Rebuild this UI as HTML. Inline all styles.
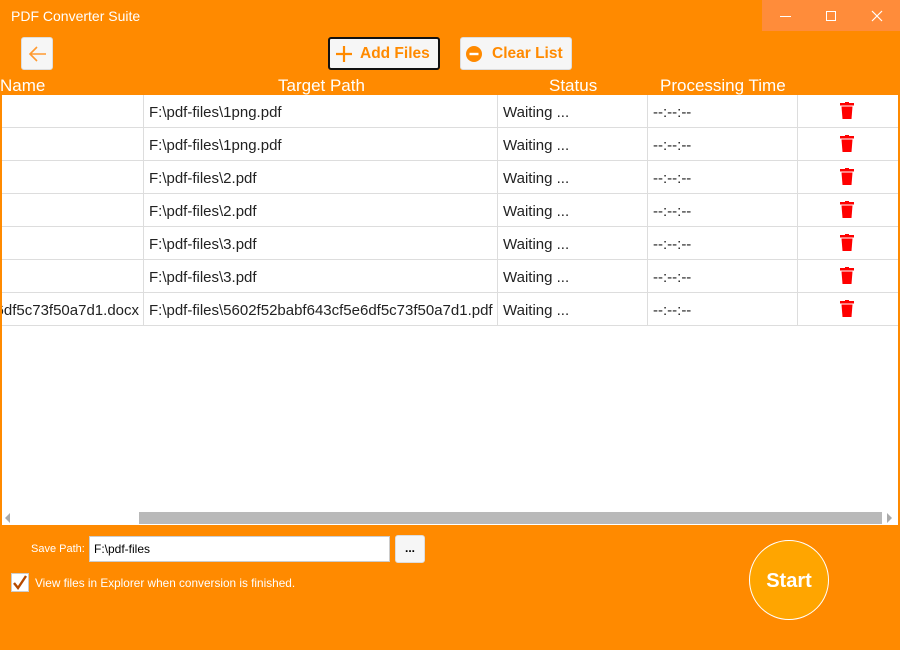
<!DOCTYPE html>
<html><head><style>
*{margin:0;padding:0;box-sizing:border-box}
body{width:900px;height:650px;background:#FF8A00;font-family:"Liberation Sans",sans-serif;position:relative;overflow:hidden}
.a{position:absolute}
.title{left:11px;top:8px;color:#fff;font-size:14px}
.ctl{left:762px;top:0;width:138px;height:31px;background:#FF8C3A}
.btn{background:#f6f6f6;border:1px solid #ddd;border-radius:3px;color:#FF8A00;font-weight:bold;font-size:15px}
.hdr{color:#fff;font-size:17px;top:76px}
.tbl{left:2px;top:95px;width:896px;height:430px;background:#fff}
.row{position:absolute;left:0;width:896px;height:33px;border-bottom:1px solid #ddd;font-size:15px;color:#222}
.row div{position:absolute;top:0;height:33px;line-height:36px;border-right:1px solid #ddd;white-space:nowrap;overflow:hidden}
.c1{left:0;width:142px;text-align:right;padding-right:4px}
.c2{left:142px;width:354px;padding-left:5px}
.c3{left:496px;width:150px;padding-left:5px}
.c4{left:646px;width:150px;padding-left:5px}
.c5{left:796px;width:100px;border-right:none!important}
</style></head><body>
<div class="a title">PDF Converter Suite</div>
<div class="a ctl">
<div class="a" style="left:18px;top:16px;width:11px;height:1px;background:#fff"></div>
<div class="a" style="left:64px;top:11px;width:10px;height:10px;border:1px solid #fff"></div>
<svg class="a" style="left:109px;top:10px" width="12" height="12"><path d="M1 1L11 11M11 1L1 11" stroke="#fff" stroke-width="1.2"/></svg>
</div>
<div class="a btn" style="left:21px;top:37px;width:32px;height:33px">
<svg class="a" style="left:5px;top:5px" width="22" height="22"><path d="M19 11H3M10 4L3 11L10 18" stroke="#FF9A30" stroke-width="1.6" fill="none"/></svg></div>
<div class="a btn" style="left:328px;top:37px;width:112px;height:33px;border:2px solid #111;line-height:30px;padding-left:30px;font-size:15.5px">Add Files
<svg class="a" style="left:5px;top:6px" width="18" height="18"><path d="M9 1V17M1 9H17" stroke="#FF8A00" stroke-width="2.2"/></svg></div>
<div class="a btn" style="left:460px;top:37px;width:112px;height:33px;line-height:32px;padding-left:31px;font-size:15.5px">Clear List
<svg class="a" style="left:4px;top:7px" width="18" height="18"><circle cx="9" cy="9" r="8" fill="#FF8A00"/><path d="M4.5 9H13.5" stroke="#fff" stroke-width="2.4"/></svg></div>
<div class="a hdr" style="left:0">Name</div>
<div class="a hdr" style="left:278px">Target Path</div>
<div class="a hdr" style="left:549px">Status</div>
<div class="a hdr" style="left:660px">Processing Time</div>
<div class="a tbl">
<div class="row" style="top:0"><div class="c1"></div><div class="c2">F:\pdf-files\1png.pdf</div><div class="c3">Waiting ...</div><div class="c4">--:--:--</div><div class="c5"></div></div>
<div class="row" style="top:33px"><div class="c1"></div><div class="c2">F:\pdf-files\1png.pdf</div><div class="c3">Waiting ...</div><div class="c4">--:--:--</div><div class="c5"></div></div>
<div class="row" style="top:66px"><div class="c1"></div><div class="c2">F:\pdf-files\2.pdf</div><div class="c3">Waiting ...</div><div class="c4">--:--:--</div><div class="c5"></div></div>
<div class="row" style="top:99px"><div class="c1"></div><div class="c2">F:\pdf-files\2.pdf</div><div class="c3">Waiting ...</div><div class="c4">--:--:--</div><div class="c5"></div></div>
<div class="row" style="top:132px"><div class="c1"></div><div class="c2">F:\pdf-files\3.pdf</div><div class="c3">Waiting ...</div><div class="c4">--:--:--</div><div class="c5"></div></div>
<div class="row" style="top:165px"><div class="c1"></div><div class="c2">F:\pdf-files\3.pdf</div><div class="c3">Waiting ...</div><div class="c4">--:--:--</div><div class="c5"></div></div>
<div class="row" style="top:198px"><div class="c1"><span style="position:absolute;right:4px;top:0">6df5c73f50a7d1.docx</span></div><div class="c2">F:\pdf-files\5602f52babf643cf5e6df5c73f50a7d1.pdf</div><div class="c3">Waiting ...</div><div class="c4">--:--:--</div><div class="c5"></div></div>
<div class="a" style="left:137px;top:417px;width:743px;height:12px;background:#b9b9b9"></div>
<svg class="a" style="left:3px;top:418px" width="6" height="10"><path d="M5 0L0 5L5 10Z" fill="#aaa"/></svg>
<svg class="a" style="left:885px;top:418px" width="6" height="10"><path d="M0 0L5 5L0 10Z" fill="#aaa"/></svg>
</div>
<svg class="a" style="left:839px;top:102px" width="16" height="482">
<defs><g id="t"><rect x="1" y="1" width="14" height="2.5" fill="#f00"/><rect x="6" y="0" width="4" height="2" fill="#f00"/><path d="M2.5 4.5H13.5L12.5 17H3.5Z" fill="#f00"/></g></defs>
<use href="#t" y="0"/><use href="#t" y="33"/><use href="#t" y="66"/><use href="#t" y="99"/><use href="#t" y="132"/><use href="#t" y="165"/><use href="#t" y="198"/>
</svg>
<div class="a" style="left:31px;top:543px;color:#fff;font-size:11px">Save Path:</div>
<div class="a" style="left:89px;top:536px;width:301px;height:26px;background:#fff;border:1px solid #ccc;font-size:12px;line-height:24px;padding-left:4px">F:\pdf-files</div>
<div class="a btn" style="left:395px;top:535px;width:30px;height:28px;color:#000;font-size:12px;text-align:center;line-height:24px">...</div>
<div class="a" style="left:11px;top:573px;width:18px;height:19px;background:#fff;border:1px solid #ccc"></div>
<svg class="a" style="left:12px;top:574px" width="16" height="17"><path d="M2 9L6 14L14 2" stroke="#B64A00" stroke-width="2.4" fill="none"/></svg>
<div class="a" style="left:35px;top:576px;color:#fff;font-size:11.8px">View files in Explorer when conversion is finished.</div>
<div class="a" style="left:749px;top:540px;width:80px;height:80px;border-radius:50%;background:#FFA500;border:1px solid #fff;color:#fff;font-weight:bold;font-size:20px;text-align:center;line-height:80px">Start</div>
</body></html>
